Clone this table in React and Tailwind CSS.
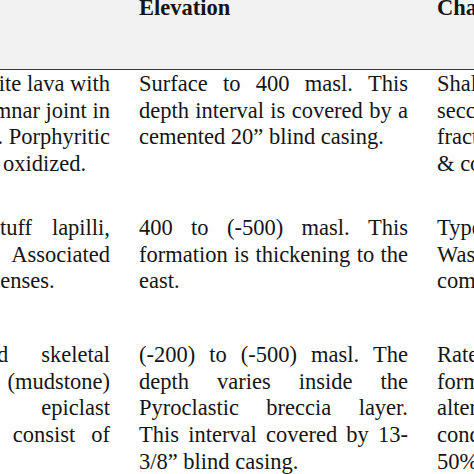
import React from 'react';

const rows = [
  {
    pad: 'pt-[1px] pb-[37px]',
    left: [
      { t: 'ite lava with', a: 'right' },
      { t: 'columnar joint in', a: 'right' },
      { t: 'part. Porphyritic', a: 'right' },
      { t: 'oxidized.', a: 'left', cls: 'pl-[3px]' },
    ],
    mid: [
      { t: 'Surface to 400 masl. This', a: 'justify' },
      { t: 'depth interval is covered by a', a: 'justify' },
      { t: 'cemented 20” blind casing.', a: 'left' },
    ],
    right: ['Shallow', 'seccondary', 'fracture', '& conductive'],
  },
  {
    pad: 'pb-[47px]',
    left: [
      { t: 'tuff lapilli,', a: 'justify' },
      { t: 'Associated', a: 'right' },
      { t: 'lenses.', a: 'left', cls: '-ml-[6px]' },
    ],
    mid: [
      { t: '400 to (-500) masl. This', a: 'justify' },
      { t: 'formation is thickening to the', a: 'justify' },
      { t: 'east.', a: 'left' },
    ],
    right: ['Type', 'Washout', 'common'],
  },
  {
    pad: 'pb-[20px]',
    left: [
      { t: 'd skeletal', a: 'justify', cls: '-ml-[3px]' },
      { t: '(mudstone)', a: 'right' },
      { t: 'epiclast', a: 'right' },
      { t: 'consist of', a: 'right', cls: 'gap-[16px]' },
    ],
    mid: [
      { t: '(-200) to (-500) masl. The', a: 'justify' },
      { t: 'depth varies inside the', a: 'justify' },
      { t: 'Pyroclastic breccia layer.', a: 'justify' },
      { t: 'This interval covered by 13-', a: 'justify' },
      { t: '3/8” blind casing.', a: 'left' },
    ],
    right: ['Rate', 'formation', 'alteration', 'conductive', '50%'],
  },
];

const Line = ({ t, a, cls = '' }) => {
  if (a === 'justify') {
    return (
      <div className={`flex justify-between whitespace-nowrap ${cls}`}>
        {t.split(' ').map((w, i) => (
          <span key={i}>{w}</span>
        ))}
      </div>
    );
  }
  if (a === 'right') {
    // split words so a fixed gap can be used where the line is stretched
    if (cls.includes('gap')) {
      return (
        <div className={`flex justify-end whitespace-nowrap ${cls}`}>
          {t.split(' ').map((w, i) => (
            <span key={i}>{w}</span>
          ))}
        </div>
      );
    }
    return (
      <div className={`flex justify-end whitespace-nowrap ${cls}`}>
        <span>{t}</span>
      </div>
    );
  }
  return <div className={`whitespace-nowrap ${cls}`}>{t}</div>;
};

export default function App() {
  return (
    <div
      className="w-[474px] h-[474px] overflow-hidden bg-white text-[#151515] text-[22.5px] leading-[26.7px]"
      style={{ fontFamily: '"Liberation Serif", "Times New Roman", serif' }}
    >
      {/* header band */}
      <div className="flex flex-col h-[69px] bg-[#f2f2f2] border-b-[1.5px] border-[#3a3a3a] box-content">
        <div className="grid grid-cols-[110px_269px_200px] gap-x-[29px] -mt-[5px] font-bold">
          <div />
          <div>Elevation</div>
          <div className="whitespace-nowrap">Characteristics</div>
        </div>
      </div>

      {/* body rows */}
      {rows.map((row, r) => (
        <div key={r} className={`grid grid-cols-[110px_269px_200px] gap-x-[29px] ${row.pad}`}>
          <div>
            {row.left.map((l, i) => (
              <Line key={i} {...l} />
            ))}
          </div>
          <div>
            {row.mid.map((l, i) => (
              <Line key={i} {...l} />
            ))}
          </div>
          <div>
            {row.right.map((w, i) => (
              <div key={i} className="whitespace-nowrap">
                {w}
              </div>
            ))}
          </div>
        </div>
      ))}
    </div>
  );
}
